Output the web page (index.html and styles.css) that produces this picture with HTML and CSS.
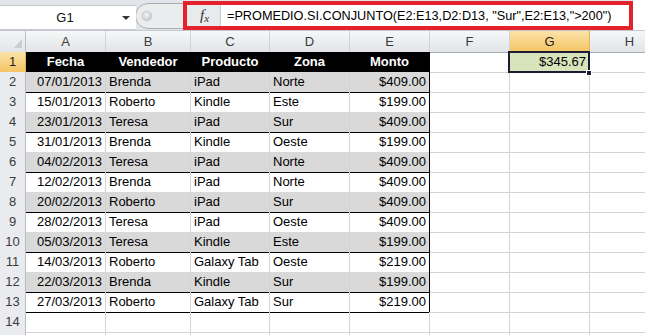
FILE: index.html
```html
<!DOCTYPE html>
<html lang="es">
<head>
<meta charset="utf-8">
<title>PROMEDIO.SI.CONJUNTO</title>
<link rel="stylesheet" href="styles.css">
</head>
<body>
<div class="topbar">
  <div class="namebox"><span class="nb-text">G1</span><span class="nb-arrow"></span></div>
  <div class="grip">
    <svg width="47" height="31" viewBox="0 0 47 31">
      <defs>
        <radialGradient id="dg" cx="0.45" cy="0.4" r="0.6">
          <stop offset="0" stop-color="#f6f6f6"/>
          <stop offset="1" stop-color="#c2c4c7"/>
        </radialGradient>
      </defs>
      <path d="M47 3.5 H12 A12.5 12.5 0 0 0 12 28.5 H47" fill="#ebecee" stroke="#a9acb1" stroke-width="1"/>
      <circle cx="11" cy="16" r="5" fill="url(#dg)" stroke="#c4c6c9" stroke-width="0.6"/>
    </svg>
  </div>
  <div class="fbox">
    <div class="fx"><span class="fx-f">f</span><span class="fx-x">x</span></div>
    <div class="formula">=PROMEDIO.SI.CONJUNTO(E2:E13,D2:D13, "Sur",E2:E13,"&gt;200")</div>
  </div>
  <div class="tail"></div>
</div>

<div class="sheet">
  <div class="row head">
    <div class="corner"><span class="tri"></span></div>
    <div class="ch">A</div><div class="ch">B</div><div class="ch">C</div><div class="ch">D</div><div class="ch">E</div><div class="ch">F</div><div class="ch sel">G</div><div class="ch">H</div>
  </div>

  <div class="row">
    <div class="rh sel">1</div>
    <div class="c hd">Fecha</div><div class="c hd">Vendedor</div><div class="c hd">Producto</div><div class="c hd">Zona</div><div class="c hd">Monto</div>
    <div class="c"></div><div class="c g1 r">$345.67<span class="selbox"></span><span class="handle"></span></div><div class="c"></div>
  </div>

  <div class="row">
    <div class="rh">2</div>
    <div class="c t g r">07/01/2013</div><div class="c t g">Brenda</div><div class="c t g">iPad</div><div class="c t g">Norte</div><div class="c t g e r">$409.00</div>
    <div class="c"></div><div class="c"></div><div class="c"></div>
  </div>
  <div class="row">
    <div class="rh">3</div>
    <div class="c t r">15/01/2013</div><div class="c t">Roberto</div><div class="c t">Kindle</div><div class="c t">Este</div><div class="c t e r">$199.00</div>
    <div class="c"></div><div class="c"></div><div class="c"></div>
  </div>
  <div class="row">
    <div class="rh">4</div>
    <div class="c t g r">23/01/2013</div><div class="c t g">Teresa</div><div class="c t g">iPad</div><div class="c t g">Sur</div><div class="c t g e r">$409.00</div>
    <div class="c"></div><div class="c"></div><div class="c"></div>
  </div>
  <div class="row">
    <div class="rh">5</div>
    <div class="c t r">31/01/2013</div><div class="c t">Brenda</div><div class="c t">Kindle</div><div class="c t">Oeste</div><div class="c t e r">$199.00</div>
    <div class="c"></div><div class="c"></div><div class="c"></div>
  </div>
  <div class="row">
    <div class="rh">6</div>
    <div class="c t g r">04/02/2013</div><div class="c t g">Teresa</div><div class="c t g">iPad</div><div class="c t g">Norte</div><div class="c t g e r">$409.00</div>
    <div class="c"></div><div class="c"></div><div class="c"></div>
  </div>
  <div class="row">
    <div class="rh">7</div>
    <div class="c t r">12/02/2013</div><div class="c t">Brenda</div><div class="c t">iPad</div><div class="c t">Norte</div><div class="c t e r">$409.00</div>
    <div class="c"></div><div class="c"></div><div class="c"></div>
  </div>
  <div class="row">
    <div class="rh">8</div>
    <div class="c t g r">20/02/2013</div><div class="c t g">Roberto</div><div class="c t g">iPad</div><div class="c t g">Sur</div><div class="c t g e r">$409.00</div>
    <div class="c"></div><div class="c"></div><div class="c"></div>
  </div>
  <div class="row">
    <div class="rh">9</div>
    <div class="c t r">28/02/2013</div><div class="c t">Teresa</div><div class="c t">iPad</div><div class="c t">Oeste</div><div class="c t e r">$409.00</div>
    <div class="c"></div><div class="c"></div><div class="c"></div>
  </div>
  <div class="row">
    <div class="rh">10</div>
    <div class="c t g r">05/03/2013</div><div class="c t g">Teresa</div><div class="c t g">Kindle</div><div class="c t g">Este</div><div class="c t g e r">$199.00</div>
    <div class="c"></div><div class="c"></div><div class="c"></div>
  </div>
  <div class="row">
    <div class="rh">11</div>
    <div class="c t r">14/03/2013</div><div class="c t">Roberto</div><div class="c t">Galaxy Tab</div><div class="c t">Oeste</div><div class="c t e r">$219.00</div>
    <div class="c"></div><div class="c"></div><div class="c"></div>
  </div>
  <div class="row">
    <div class="rh">12</div>
    <div class="c t g r">22/03/2013</div><div class="c t g">Brenda</div><div class="c t g">Kindle</div><div class="c t g">Sur</div><div class="c t g e r">$199.00</div>
    <div class="c"></div><div class="c"></div><div class="c"></div>
  </div>
  <div class="row">
    <div class="rh">13</div>
    <div class="c t r">27/03/2013</div><div class="c t">Roberto</div><div class="c t">Galaxy Tab</div><div class="c t">Sur</div><div class="c t e r">$219.00</div>
    <div class="c"></div><div class="c"></div><div class="c"></div>
  </div>
  <div class="row">
    <div class="rh">14</div>
    <div class="c"></div><div class="c"></div><div class="c"></div><div class="c"></div><div class="c"></div><div class="c"></div><div class="c"></div><div class="c"></div>
  </div>
  <div class="row last">
    <div class="rh"></div>
    <div class="c"></div><div class="c"></div><div class="c"></div><div class="c"></div><div class="c"></div><div class="c"></div><div class="c"></div><div class="c"></div>
  </div>
</div>
</body>
</html>
```

FILE: styles.css
```css
* { box-sizing: border-box; }

html, body {
  margin: 0;
  padding: 0;
}

body {
  width: 645px;
  height: 335px;
  overflow: hidden;
  background: #ffffff;
  font-family: "Liberation Sans", Arial, sans-serif;
  color: #000;
}

/* ---------- formula bar ---------- */
.topbar {
  display: flex;
  align-items: flex-start;
  height: 31px;
  background: #e2e5e9;
  border-bottom: 1px solid #c3c7cc;
}

.namebox {
  margin-top: 5px;
  width: 136px;
  height: 25px;
  background: #fff;
  border-top: 1px solid #c6c9ce;
  border-bottom: 1px solid #c6c9ce;
  display: flex;
  align-items: center;
}

.nb-text {
  flex: 1;
  text-align: center;
  font-size: 13px;
  padding-left: 8px;
  color: #111;
}

.nb-arrow {
  width: 0;
  height: 0;
  margin-right: 6px;
  border-left: 4px solid transparent;
  border-right: 4px solid transparent;
  border-top: 4px solid #333;
}

.grip {
  width: 47px;
  height: 31px;
  display: flex;
}

.fbox {
  margin-top: 1px;
  width: 450px;
  height: 29px;
  border: 4px solid #e5222b;
  display: flex;
  background: #fff;
}

.fx {
  width: 34px;
  background: #e9eaec;
  border-right: 1px solid #c9cbce;
  display: flex;
  align-items: center;
  justify-content: center;
  font-family: "Liberation Serif", "Times New Roman", serif;
  font-style: italic;
  color: #333;
  padding-left: 2px;
}

.fx-f { font-size: 15px; }
.fx-x { font-size: 11px; margin-top: 4px; margin-left: 0; }

.formula {
  flex: 1;
  padding-left: 6px;
  padding-top: 1px;
  font-size: 12.7px;
  line-height: 21px;
  white-space: nowrap;
  overflow: hidden;
  color: #000;
}

.tail {
  flex: 1;
  height: 30px;
  background: #fff;
}

/* ---------- sheet ---------- */
.sheet {
  width: 670px;
}

.row {
  display: grid;
  grid-template-columns: 26px 80px 85px 79px 80px 80px 80px 80px 80px;
  height: 20px;
}

.row.head {
  height: 21px;
}

.row.last {
  height: 4px;
}

.corner {
  background: linear-gradient(#f4f5f7, #e3e5e8);
  border-right: 1px solid #b9bdc2;
  border-bottom: 1px solid #a9aeb4;
  display: flex;
  justify-content: flex-end;
  align-items: flex-end;
  padding: 0 3px 4px 0;
}

.tri {
  width: 0;
  height: 0;
  border-left: 8px solid transparent;
  border-bottom: 9px solid #c9ccd0;
}

.ch {
  background: linear-gradient(#f6f7f8, #e2e4e7);
  border-right: 1px solid #cfd2d6;
  border-bottom: 1px solid #a9aeb4;
  text-align: center;
  font-size: 13px;
  line-height: 21px;
  color: #3b3b3b;
}

.rh {
  background: #e9ebee;
  border-right: 1px solid #b9bdc2;
  border-bottom: 1px solid #cfd2d6;
  text-align: center;
  font-size: 13px;
  line-height: 20px;
  color: #3b3b3b;
}

.ch.sel,
.rh.sel {
  background: linear-gradient(#fbe3a8, #f3c463);
  border-right-color: #e2b35a;
  border-bottom-color: #d9a84e;
  color: #222;
}

.c {
  border-right: 1px solid #d4d4d4;
  border-bottom: 1px solid #d4d4d4;
  padding: 0 3px;
  font-size: 13px;
  line-height: 20px;
  white-space: nowrap;
  overflow: hidden;
}

.row.last .c,
.row.last .rh {
  border-bottom: 0;
}

.r { text-align: right; }

.hd {
  background: #000;
  color: #fff;
  font-weight: bold;
  text-align: center;
  border-right-color: #000;
  border-bottom-color: #000;
}

.t { border-bottom-color: #000; }
.g { background: #d9d9d9; }
.e { border-right-color: #000; }

.g1 {
  background: #d8e4bc;
  position: relative;
  overflow: visible;
}

.selbox {
  position: absolute;
  left: -2px;
  top: -1px;
  right: -1px;
  bottom: -1px;
  border: 2px solid #1d1a35;
  z-index: 2;
}

.handle {
  position: absolute;
  right: -3px;
  bottom: -4px;
  width: 6px;
  height: 6px;
  background: #1d1a35;
  border: 1px solid #fff;
  z-index: 3;
}
```
